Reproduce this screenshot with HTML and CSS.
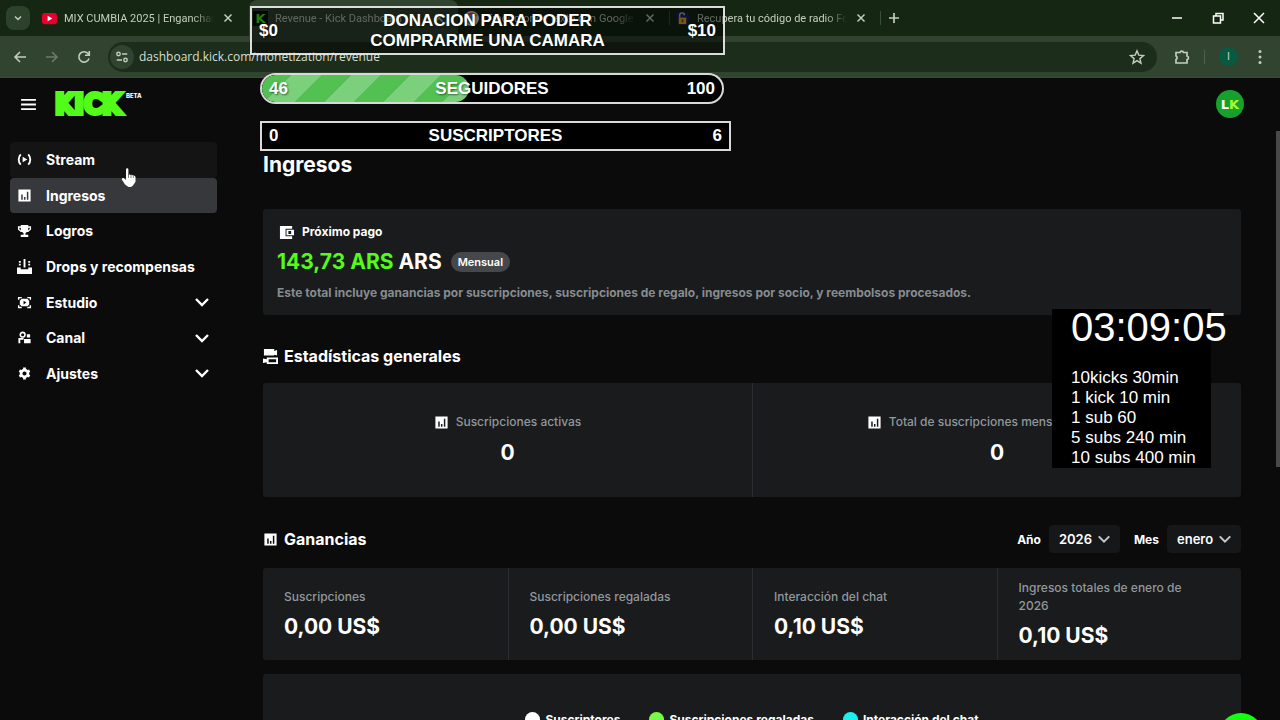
FILE: index.html
```html
<!DOCTYPE html>
<html lang="es">
<head>
<meta charset="utf-8">
<meta name="viewport" content="width=device-width, initial-scale=1">
<title>Revenue - Kick Dashboard</title>
<link rel="stylesheet" href="styles.css">
</head>
<body>
<svg class="defs" aria-hidden="true">
  <symbol id="i-chart" viewBox="0 0 16 16"><path fill="currentColor" fill-rule="evenodd" d="M1.500 1.500h13v13h-13zM4.500 7v5.500h1.600V7zm2.900 2.500v3H9v-3zM10.500 4v8.500h1.600V4z"/></symbol>
  <symbol id="i-down" viewBox="0 0 16 16"><path d="M2 5l6 6 6-6" fill="none" stroke="currentColor" stroke-width="2.400"/></symbol>
  <symbol id="i-x" viewBox="0 0 16 16"><path d="M4 4l8 8M12 4l-8 8" fill="none" stroke="currentColor" stroke-width="1.700"/></symbol>
</svg>

<header class="browser">
  <div class="tabs">
    <button class="tab-search" aria-label="Buscar pestañas"><svg viewBox="0 0 16 16" width="12" height="12"><path d="M4 6l4 4 4-4" fill="none" stroke="currentColor" stroke-width="2"/></svg></button>
    <div class="tab">
      <svg class="fav" viewBox="0 0 16 16"><rect y="2" width="16" height="12" rx="3" fill="#e6002e"/><path d="M6 5l5 3-5 3z" fill="#fff"/></svg>
      <span class="tab-title">MIX CUMBIA 2025 | Enganchados</span>
      <button class="tab-x" aria-label="Cerrar"><svg><use href="#i-x"/></svg></button>
    </div>
    <div class="tab active">
      <span class="fav fav-k">K</span>
      <span class="tab-title">Revenue - Kick Dashboard</span>
      <button class="tab-x" aria-label="Cerrar"><svg><use href="#i-x"/></svg></button>
    </div>
    <div class="tab split">
      <svg class="fav" viewBox="0 0 16 16"><circle cx="8" cy="8" r="8" fill="#dfe3ea"/><path d="M2 5a7 7 0 0 1 12 0z" fill="#d9483b"/><path d="M2 6a7 7 0 0 0 4 8l1-4z" fill="#3c78d8"/><circle cx="8" cy="8" r="3" fill="#4b7fe0"/></svg>
      <span class="tab-title">Traductor de texto con Google</span>
      <button class="tab-x" aria-label="Cerrar"><svg><use href="#i-x"/></svg></button>
    </div>
    <div class="tab split">
      <svg class="fav" viewBox="0 0 16 16"><path d="M1 3l5-3 8 2 2 6-4 7-8-1z" fill="#1b2170"/><path d="M5 7V4.500a2.500 2.500 0 0 1 5 0" fill="none" stroke="#d8c27a" stroke-width="1.500"/><rect x="4" y="7" width="8" height="7" fill="#e8b41e"/><path d="M8 9v3" stroke="#5a4200" stroke-width="1.500"/></svg>
      <span class="tab-title">Recupera tu código de radio Ford</span>
      <button class="tab-x" aria-label="Cerrar"><svg><use href="#i-x"/></svg></button>
    </div>
    <button class="new-tab" aria-label="Nueva pestaña"><svg viewBox="0 0 16 16"><path d="M8 3v10M3 8h10" stroke="currentColor" stroke-width="1.700"/></svg></button>
    <div class="window-buttons">
      <button aria-label="Minimizar"><svg viewBox="0 0 16 16"><path d="M3 8h10" stroke="currentColor" stroke-width="1.500"/></svg></button>
      <button aria-label="Restaurar"><svg viewBox="0 0 16 16"><path d="M3.500 6h7v7h-7zM6 6V3.500h7V10h-2.500" fill="none" stroke="currentColor" stroke-width="1.500"/></svg></button>
      <button aria-label="Cerrar ventana"><svg viewBox="0 0 16 16"><path d="M3 3l10 10M13 3L3 13" stroke="currentColor" stroke-width="1.500"/></svg></button>
    </div>
  </div>
  <div class="toolbar">
    <button class="tool" aria-label="Atrás"><svg viewBox="0 0 16 16"><path d="M14 8H3M8 3L3 8l5 5" fill="none" stroke="currentColor" stroke-width="1.600"/></svg></button>
    <button class="tool dim" aria-label="Adelante"><svg viewBox="0 0 16 16"><path d="M2 8h11M8 3l5 5-5 5" fill="none" stroke="currentColor" stroke-width="1.600"/></svg></button>
    <button class="tool" aria-label="Recargar"><svg viewBox="0 0 16 16"><path d="M13 9.500A5.200 5.200 0 1 1 12 4.500L13 6M13.300 2v4.200H9" fill="none" stroke="currentColor" stroke-width="1.600"/></svg></button>
    <div class="address">
      <button class="site-info" aria-label="Información del sitio"><svg viewBox="0 0 16 16"><g fill="none" stroke="currentColor" stroke-width="1.600"><circle cx="4" cy="4.500" r="2"/><path d="M8 4.500h6M2 11.500h6"/><circle cx="12" cy="11.500" r="2"/></g></svg></button>
      <input class="url" type="text" aria-label="Dirección" value="dashboard.kick.com/monetization/revenue">
      <button class="star" aria-label="Favorito"><svg viewBox="0 0 16 16"><path d="M8 1.800l1.800 4.300 4.700.4-3.600 3.100 1.100 4.600L8 11.700l-4 2.500 1.100-4.600L1.500 6.500l4.700-.4z" fill="none" stroke="currentColor" stroke-width="1.400"/></svg></button>
    </div>
    <button class="ext" aria-label="Extensiones"><svg viewBox="0 0 16 16"><path d="M2 3.500h4a1.800 1.800 0 0 1 3.500 0H13V7a1.900 1.900 0 0 1 0 3.700V14H2v-3.500a2 2 0 0 0 0-3.600z" fill="none" stroke="currentColor" stroke-width="1.700"/></svg></button>
    <span class="divider"></span>
    <button class="profile" aria-label="Perfil">I</button>
    <button class="menu" aria-label="Menú"><svg viewBox="0 0 16 16"><g fill="currentColor"><circle cx="8" cy="2.500" r="1.500"/><circle cx="8" cy="8" r="1.500"/><circle cx="8" cy="13.500" r="1.500"/></g></svg></button>
  </div>
</header>

<div class="app">
  <header class="topbar">
    <button class="burger" aria-label="Menú"><svg viewBox="0 0 16 14"><path d="M0 2h16M0 7h16M0 12h16" stroke="currentColor" stroke-width="2"/></svg></button>
    <a class="brand" href="#"><span class="logo">KICK</span><span class="beta">BETA</span></a>
    <button class="avatar" aria-label="Cuenta">L<b>K</b></button>
  </header>

  <div class="body">
    <nav class="side">
      <a class="item hover" href="#"><svg viewBox="0 0 16 16"><path d="M4 2.500a8 8 0 0 0 0 11M12 2.500a8 8 0 0 1 0 11" fill="none" stroke="currentColor" stroke-width="2"/><path d="M6 5l5 3-5 3z" fill="currentColor"/></svg><span>Stream</span></a>
      <a class="item current" href="#"><svg><use href="#i-chart"/></svg><span>Ingresos</span></a>
      <a class="item" href="#"><svg viewBox="0 0 16 16"><path fill="currentColor" d="M4 2h8v1.500h3V7l-3 2.500h-1.500L9 11v1.500h3V15H4v-2.500h3V11L5.500 9.500H4L1 7V3.500h3zM2.500 5v1.500L4 8V5zM12 5v3l1.500-1.500V5z"/></svg><span>Logros</span></a>
      <a class="item" href="#"><svg viewBox="0 0 16 16"><path fill="currentColor" d="M0 9h4v2h8V9h4v7H0zM7 0h2v9H7zM2 2h2v2H2zM2 5h2v2H2zM12 2h2v2h-2zM12 5h2v2h-2z"/></svg><span>Drops y recompensas</span></a>
      <a class="item" href="#"><svg viewBox="0 0 16 16"><path fill="currentColor" d="M1 2h4v1.500H2.500V5H1zM11 2h4v3h-1.500V3.500H11zM1 11h1.500v1.500H5V14H1zM13.500 11H15v3h-4v-1.500h2.500z"/><path fill="currentColor" fill-rule="evenodd" d="M5 4h6l2 2v4l-2 2H5l-2-2V6zM7 6v4l3-2z"/></svg><span>Estudio</span><svg class="chev"><use href="#i-down"/></svg></a>
      <a class="item" href="#"><svg viewBox="0 0 16 16"><circle cx="6" cy="5" r="2.500" fill="none" stroke="currentColor" stroke-width="1.700"/><path d="M2.500 14V9.500H7" fill="none" stroke="currentColor" stroke-width="2"/><path fill="currentColor" d="M10.500 4.500h3.500V8h-3.500zM7.500 9.500H14.500V14h-7z"/></svg><span>Canal</span><svg class="chev"><use href="#i-down"/></svg></a>
      <a class="item" href="#"><svg viewBox="0 0 16 16"><circle cx="8" cy="8" r="3.600" fill="none" stroke="currentColor" stroke-width="2.800"/><path d="M8 1.500v2.500M8 12v2.500M2.500 5L4.600 6M11.400 10l2.100 1M2.500 11L4.600 10M11.400 6l2.100-1" stroke="currentColor" stroke-width="3"/></svg><span>Ajustes</span><svg class="chev"><use href="#i-down"/></svg></a>
    </nav>

    <main class="main">
      <h1>Ingresos</h1>

      <section class="panel payout">
        <h2 class="payout-label"><svg viewBox="0 0 16 16"><path fill="currentColor" fill-rule="evenodd" d="M1 1h13v3H7v8h7v3H1zM8 5h8v6H8zM10 6.500v3h3v-3z"/></svg>Próximo pago</h2>
        <p class="amount"><span><em>143,73 ARS</em> ARS</span><span class="pill">Mensual</span></p>
        <p class="note">Este total incluye ganancias por suscripciones, suscripciones de regalo, ingresos por socio, y reembolsos procesados.</p>
      </section>

      <h2 class="section-title stats-title"><svg viewBox="0 0 16 16"><path fill="currentColor" fill-rule="evenodd" d="M1 0h11v2l3-1v6l-3-1v1H1zM4 9h12v7H4v-2l-4 1v-5l4 1zM6 11v3h8v-3z"/></svg>Estadísticas generales</h2>
      <section class="panel stats">
        <div class="stat"><p class="label"><svg><use href="#i-chart"/></svg>Suscripciones activas</p><p class="value">0</p></div>
        <div class="stat"><p class="label"><svg><use href="#i-chart"/></svg>Total de suscripciones mensuales activas</p><p class="value">0</p></div>
      </section>

      <div class="earn-head">
        <h2 class="section-title"><svg><use href="#i-chart"/></svg>Ganancias</h2>
        <div class="filters">
          <label for="year">Año</label>
          <span class="picker"><select id="year"><option>2026</option></select><svg><use href="#i-down"/></svg></span>
          <label for="month">Mes</label>
          <span class="picker"><select id="month"><option>enero</option></select><svg><use href="#i-down"/></svg></span>
        </div>
      </div>
      <section class="panel earnings">
        <div class="earn"><p class="label">Suscripciones</p><p class="value">0,00 US$</p></div>
        <div class="earn"><p class="label">Suscripciones regaladas</p><p class="value">0,00 US$</p></div>
        <div class="earn"><p class="label">Interacción del chat</p><p class="value">0,10 US$</p></div>
        <div class="earn"><p class="label">Ingresos totales de enero de 2026</p><p class="value">0,10 US$</p></div>
      </section>

      <section class="panel legend">
        <span class="key"><i class="dot white"></i>Suscriptores</span>
        <span class="key"><i class="dot green"></i>Suscripciones regaladas</span>
        <span class="key"><i class="dot cyan"></i>Interacción del chat</span>
      </section>
    </main>
  </div>
  <div class="scroll-thumb"></div>
  <button class="fab" aria-label="Ayuda"></button>
</div>

<div class="goal donation"><span>$0</span><strong>DONACION PARA PODER COMPRARME UNA CAMARA</strong><span>$10</span></div>
<div class="goal followers"><div class="fill" style="width:45%"></div><span>46</span><strong>SEGUIDORES</strong><span>100</span></div>
<div class="goal subs"><span>0</span><strong>SUSCRIPTORES</strong><span>6</span></div>
<aside class="timer">
  <p class="clock">03:09:05</p>
  <ul><li>10kicks 30min</li><li>1 kick 10 min</li><li>1 sub 60</li><li>5 subs 240 min</li><li>10 subs 400 min</li></ul>
</aside>
<svg class="cursor" viewBox="0 0 16 20"><path fill="#fff" d="M5 1.500a1.200 1.200 0 0 1 2.400 0V7l1-.8 1.300.8 1-.3 1.200.9 1.200-.2 1.400 1.400v5L12 17.500 10 19H7.500L4 16.500.8 11.500l.6-1.500 1.300.1L5 12z"/><path d="M7.500 6v4M10 7v3M12.300 8v2" stroke="#333" stroke-width=".6"/></svg>
</body>
</html>
```

FILE: styles.css
```css
* { box-sizing: border-box; }
body {
  margin: 0;
  height: 100vh;
  display: flex;
  flex-direction: column;
  overflow: hidden;
  position: relative;
  background: #0b0b0c;
  color: #fff;
  font-family: Inter, "Liberation Sans", sans-serif;
  font-size: 14px;
}
h1, h2, p, ul { margin: 0; padding: 0; }
button { margin: 0; padding: 0; border: 0; background: none; color: inherit; font: inherit; display: grid; place-items: center; }
a { color: inherit; text-decoration: none; }
.defs { position: absolute; width: 0; height: 0; }

/* browser chrome */
.browser { flex: none; background: #152612; color: #c3cebe; font-family: Roboto, "Open Sans", sans-serif; font-size: 11px; }
.tabs { display: flex; align-items: center; height: 36px; padding-left: 6px; }
.tab-search { width: 24px; height: 24px; margin-right: 8px; border-radius: 8px; background: #2c422b; }
.tab { display: flex; align-items: center; gap: 7px; width: 209px; height: 36px; padding: 0 12px 0 4px; margin-right: 2px; position: relative; }
.tab.active { background: #314430; border-radius: 8px 8px 0 0; }
.split::after { content: ""; position: absolute; right: -1px; top: 11px; width: 1px; height: 14px; background: #3a4f37; }
.fav { flex: none; width: 15px; height: 15px; }
.fav-k { background: #0b0b0c; color: #4cf51c; font: 900 13px/15px "DejaVu Sans", sans-serif; text-align: center; }
.tab-title { flex: 1; overflow: hidden; white-space: nowrap; mask-image: linear-gradient(90deg, #000 85%, transparent); }
.tab-x svg { width: 14px; height: 14px; }
.new-tab { margin-left: 4px; }
.new-tab svg { width: 16px; height: 16px; display: block; }
.window-buttons { display: flex; gap: 25px; margin-left: auto; padding-right: 13px; color: #fff; }
.window-buttons svg { width: 16px; height: 16px; }
.toolbar { display: flex; align-items: center; height: 42px; padding: 0 12px; background: #314430; border-bottom: 1px solid #3a4c39; }
.tool { width: 16px; margin-right: 16px; }
.tool svg, .star svg, .ext svg, .menu svg { width: 16px; height: 16px; }
.dim { opacity: .4; }
.address { flex: 1; display: flex; align-items: center; height: 30px; padding: 0 12px 0 2px; border-radius: 15px; background: #1d2d1b; }
.site-info { width: 24px; height: 24px; border-radius: 12px; background: #314430; }
.site-info svg { width: 14px; height: 14px; }
.url { flex: 1; min-width: 0; margin-left: 3px; border: 0; background: none; color: #d5dfd0; font: 12px "Open Sans", "Noto Sans", sans-serif; }
.ext { margin-left: 17px; }
.divider { width: 1px; height: 14px; margin: 0 14px; background: #4d6249; }
.profile { width: 19px; height: 19px; border-radius: 10px; background: #085a43; font-size: 11px; }
.menu { margin-left: 14px; }

/* dashboard */
.app { flex: 1; min-height: 0; display: flex; flex-direction: column; position: relative; overflow: hidden; }
.topbar { flex: none; display: flex; align-items: center; height: 52px; padding: 0 36px 0 21px; }
.burger svg { width: 15px; height: 13px; display: block; }
.brand { display: flex; align-items: flex-start; margin: 2px 0 0 19px; }
.logo { color: #53fc18; font: 700 28px/26px "DejaVu Sans Condensed", "DejaVu Sans", sans-serif; font-stretch: condensed; -webkit-text-stroke: 4px #53fc18; }
.beta { margin-left: 4px; font-size: 6px; font-weight: 800; line-height: 8px; }
.avatar { display: flex; justify-content: center; align-items: center; width: 28px; height: 28px; margin-left: auto; border-radius: 50%; background: #16a02c; font: 800 13px "DejaVu Sans", sans-serif; }
.avatar b { color: #a4ff35; font-weight: 900; }
.body { flex: 1; min-height: 0; display: grid; grid-template-columns: 207px minmax(0, 1fr); column-gap: 46px; padding: 0 39px 0 10px; }
.side { display: grid; grid-auto-rows: 1fr; height: 249px; margin-top: 12px; font-weight: 700; }
.item { display: flex; align-items: center; gap: 14px; padding: 0 7px; border-radius: 4px; }
.item svg { flex: none; width: 15px; height: 15px; }
.item .chev { width: 16px; height: 16px; margin-left: auto; }
.hover { background: #141415; }
.current { background: #36383b; }
.main { min-width: 0; }
h1 { margin-top: 21px; font-size: 21px; line-height: 28px; font-weight: 700; }
.panel { background: #191b1c; border-radius: 3px; }
.payout { margin-top: 30px; padding: 14px 14px 13px; }
.payout-label { display: flex; align-items: center; gap: 8px; padding-left: 2px; font-size: 12px; line-height: 18px; font-weight: 700; }
.payout-label svg { width: 15px; height: 15px; }
.amount { display: flex; align-items: center; gap: 9px; margin-top: 7px; font-size: 21px; line-height: 28px; font-weight: 700; }
.amount em { color: #53fc18; font-style: normal; }
.pill { padding: 0 7px; border-radius: 10px; background: #45484b; font-size: 11px; line-height: 20px; font-weight: 600; }
.note { margin-top: 8px; font-size: 12px; line-height: 18px; font-weight: 700; color: #868c90; }
.section-title { display: flex; align-items: center; gap: 6px; font-size: 16px; line-height: 24px; font-weight: 700; }
.section-title svg { width: 15px; height: 15px; }
.stats-title { margin-top: 29px; }
.stats { display: grid; grid-template-columns: 1fr 1fr; height: 114px; margin-top: 15px; }
.stat { padding-top: 30px; text-align: center; }
.stat + .stat, .earn + .earn { border-left: 1px solid #2b2e30; }
.label { color: #92989c; font-size: 12px; line-height: 18px; font-weight: 500; }
.stat .label { display: flex; justify-content: center; align-items: center; gap: 7px; white-space: nowrap; }
.label svg { width: 15px; height: 15px; color: #fff; }
.value { font-size: 21px; line-height: 28px; font-weight: 700; }
.stat .value { margin-top: 8px; }
.earn-head { display: flex; justify-content: space-between; align-items: center; margin-top: 28px; }
.filters { display: flex; align-items: center; font-size: 12px; font-weight: 700; }
.filters label + .picker { margin-left: 8px; }
.picker + label { margin-left: 14px; }
.picker { position: relative; }
.picker select { appearance: none; height: 28px; padding: 0 27px 0 10px; border: 0; border-radius: 4px; background: #161718; color: #fff; font: 600 13px Inter, sans-serif; display: block; }
.picker svg { position: absolute; right: 9px; top: 7px; width: 14px; height: 14px; color: #c5c8ca; pointer-events: none; }
.earnings { display: grid; grid-template-columns: repeat(4, 1fr); height: 92px; margin-top: 15px; }
.earn { display: flex; flex-direction: column; justify-content: center; gap: 7px; padding: 0 40px 0 21px; }
.legend { display: flex; justify-content: center; gap: 29px; height: 300px; margin-top: 14px; padding-top: 37px; font-size: 12px; font-weight: 700; line-height: 18px; }
.key { display: flex; gap: 5px; }
.dot { width: 15px; height: 15px; margin-top: 1px; border-radius: 50%; }
.white { background: #fff; }
.green { background: #75fd46; }
.cyan { background: #1cf0ee; }
.scroll-thumb { position: absolute; right: 0; top: 53px; width: 4px; height: 336px; background: #48494b; }
.fab { position: absolute; right: 17px; bottom: -37px; width: 44px; height: 44px; border-radius: 50%; background: #14ff10; }

/* stream overlays */
.goal { position: absolute; display: grid; grid-template-columns: 1fr auto 1fr; align-items: center; border: 2px solid rgba(255, 255, 255, .85); padding: 0 7px; font: 700 17px/20px "Liberation Sans", sans-serif; text-shadow: 1px 1px 2px rgba(0, 0, 0, .5); }
.goal span, .goal strong { position: relative; text-align: center; }
.goal span { justify-self: start; }
.goal strong + span { justify-self: end; }
.donation { left: 250px; top: 6px; width: 475px; height: 49px; background: rgba(0, 0, 0, .5); }
.donation strong { max-width: 250px; }
.followers { left: 260px; top: 73px; width: 464px; height: 31px; border-radius: 16px; background: #000; overflow: hidden; }
.fill { position: absolute; left: 0; top: 0; bottom: 0; border-radius: 14px; background: repeating-linear-gradient(135deg, #52c152 0 21px, #7bd07b 21px 42px); }
.subs { left: 260px; top: 121px; width: 471px; height: 30px; background: #000; }
.timer { position: absolute; left: 1052px; top: 309px; width: 159px; height: 159px; padding-left: 19px; background: #000; font-family: "Liberation Sans", sans-serif; white-space: nowrap; }
.clock { font-size: 40px; line-height: 36px; }
.timer ul { margin-top: 23px; list-style: none; font-size: 17px; line-height: 20px; }
.cursor { position: absolute; left: 121px; top: 168px; width: 16px; height: 20px; }
```
